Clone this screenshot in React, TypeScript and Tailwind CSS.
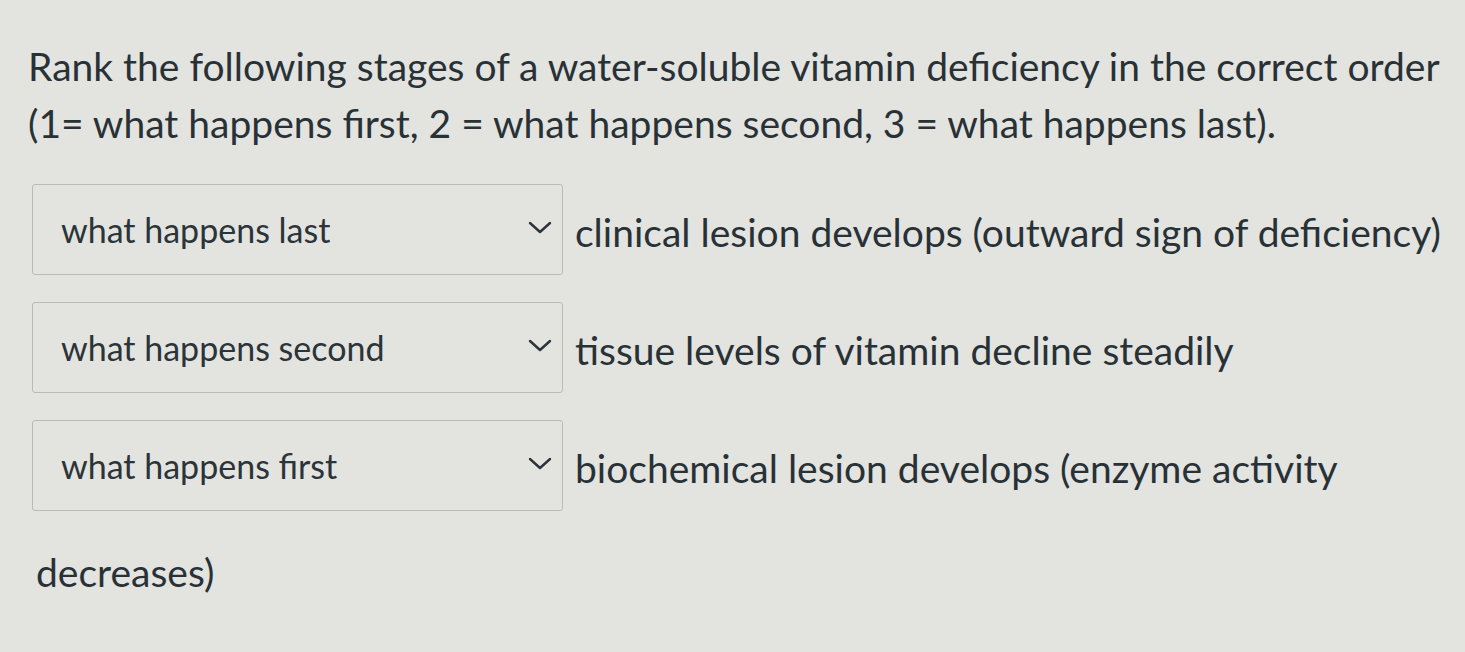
const rows = [
  { value: "what happens last", text: "clinical lesion develops (outward sign of deficiency)" },
  { value: "what happens second", text: "tissue levels of vitamin decline steadily" },
  { value: "what happens first", text: "biochemical lesion develops (enzyme activity" },
];

function Chevron() {
  return (
    <svg width="24" height="14" viewBox="0 0 24 14" fill="none" className="mb-[4px]">
      <path d="M2 2 L12 11 L22 2" stroke="#2b3438" strokeWidth="2.4" strokeLinecap="round" strokeLinejoin="round" />
    </svg>
  );
}

function Select({ value }: { value: string }) {
  return (
    <div className="flex h-[91px] w-[531px] shrink-0 items-center justify-between rounded-[3px] border border-[#b9bbbb] pl-[28px] pr-[10px]">
      <span className="text-[34px] text-[#2b3438]">{value}</span>
      <Chevron />
    </div>
  );
}

export default function App() {
  return (
    <main
      className="h-[652px] w-[1465px] overflow-hidden bg-[#e3e3e0] text-[#283236]"
      style={{ fontFamily: "Lato, 'Noto Sans', sans-serif" }}
    >
      <div className="pl-[28px] pt-[38px]">
        <p className="text-[39px] leading-[57px]">
          Rank the following stages of a water-soluble vitamin deficiency in the correct order
          <br />
          (1= what happens first, 2 = what happens second, 3 = what happens last).
        </p>

        <div className="mt-[32px] flex flex-col gap-[27px] pl-[4px]">
          {rows.map((r) => (
            <div key={r.value} className="flex items-center gap-[12px]">
              <Select value={r.value} />
              <span className="mt-[6px] text-[39px]">{r.text}</span>
            </div>
          ))}
        </div>

        <p className="mt-[32px] pl-[8px] text-[39px]">decreases)</p>
      </div>
    </main>
  );
}
